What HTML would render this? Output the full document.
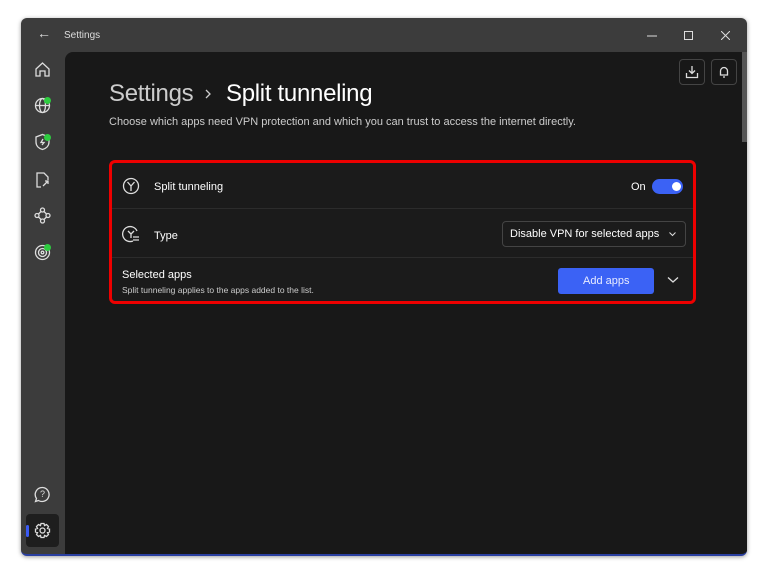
<!DOCTYPE html>
<html><head><meta charset="utf-8"><style>
*{box-sizing:border-box;margin:0;padding:0}
body{width:768px;height:575px;background:#fff;font-family:"Liberation Sans",sans-serif;position:relative;overflow:hidden;color:#fff}
.win{position:absolute;left:21px;top:18px;width:726px;height:538px;background:#3c3c3c;border-radius:6px;overflow:hidden;box-shadow:0 1px 4px rgba(0,0,0,.4);border-bottom:2px solid #2a3fa0}
.content{position:absolute;left:44px;top:34px;right:0;bottom:0;background:#181818;border-top-left-radius:8px}
.t{position:absolute;white-space:nowrap}
svg{position:absolute;fill:none;stroke:#ddd;stroke-width:1.3}
.dot{position:absolute;width:7px;height:7px;border-radius:50%;background:#2ecc40}
.box{position:absolute;left:109px;top:160px;width:587px;height:144px;border:3px solid #e00;border-radius:6px;background:#1b1b1b}
.sep{position:absolute;left:0;right:0;height:1px;background:#2c2c2c}
</style></head><body>
<div class="win">
<div class="t" style="left:16px;top:7px;font-size:14px;color:#ddd">←</div>
<div class="t" style="left:43px;top:12px;font-size:10px;color:#ddd">Settings</div>
<svg style="left:626px;top:17px" width="10" height="2" viewBox="0 0 10 2"><path d="M0 1H10" stroke-width="1"/></svg>
<div style="position:absolute;left:663px;top:13px;width:9px;height:9px;border:1px solid #ddd"></div>
<svg style="left:700px;top:13px" width="9" height="9" viewBox="0 0 9 9"><path d="M0 0L9 9M9 0L0 9" stroke-width="1"/></svg>
<div class="content"></div>
<div style="position:absolute;right:0;top:34px;width:5px;height:90px;background:#555"></div>
</div>
<svg style="left:34px;top:61px" width="17" height="17" viewBox="0 0 17 17"><path d="M2 8 L8.5 2 L15 8 V15 H11 V10 H6 V15 H2 Z"/></svg>
<svg style="left:34px;top:97px" width="17" height="17" viewBox="0 0 17 17"><circle cx="8.5" cy="8.5" r="7"/><ellipse cx="8.5" cy="8.5" rx="3" ry="7"/><path d="M1.5 8.5H15.5"/></svg><div class="dot" style="left:44px;top:97px"></div>
<svg style="left:34px;top:133px" width="17" height="18" viewBox="0 0 17 18"><path d="M8.5 1.5 L15 4 V9 C15 13 12 15.5 8.5 16.5 C5 15.5 2 13 2 9 V4 Z"/><path d="M9 6 L7 9.5 H10 L8 12"/></svg><div class="dot" style="left:44px;top:134px"></div>
<svg style="left:34px;top:171px" width="17" height="18" viewBox="0 0 17 18"><path d="M7 16 H3 V2 H10 L14 6 V9"/><path d="M9 15 L14 10 M11 10 H14 V13"/></svg>
<svg style="left:34px;top:207px" width="17" height="17" viewBox="0 0 17 17"><circle cx="8.5" cy="3" r="2"/><circle cx="3" cy="8.5" r="2"/><circle cx="14" cy="8.5" r="2"/><circle cx="8.5" cy="14" r="2"/><path d="M7 4.5 L4.5 7 M10 4.5 L12.5 7 M4.5 10 L7 12.5 M12.5 10 L10 12.5"/></svg>
<svg style="left:34px;top:244px" width="17" height="17" viewBox="0 0 17 17"><circle cx="8.5" cy="8.5" r="7"/><circle cx="8.5" cy="8.5" r="4"/><circle cx="8.5" cy="8.5" r="1.3"/></svg><div class="dot" style="left:44px;top:244px"></div>
<svg style="left:34px;top:486px" width="17" height="17" viewBox="0 0 17 17"><path d="M8.5 1.5 A7 7 0 1 1 4.5 14.5 L1.5 15.5 L2.5 12.5 A7 7 0 0 1 8.5 1.5Z"/></svg><div class="t" style="left:40px;top:489px;font-size:9px;color:#ddd">?</div>
<div style="position:absolute;left:26px;top:514px;width:33px;height:33px;background:#1e1e1e;border-radius:4px"></div>
<div style="position:absolute;left:26px;top:525px;width:3px;height:12px;background:#3b5bf5;border-radius:2px"></div>
<svg style="left:34px;top:522px" width="17" height="17" viewBox="0 0 17 17"><circle cx="8.5" cy="8.5" r="2.5"/><path d="M7 1.5H10L10.5 3.5L12.5 2.5L14.5 4.5L13.5 6.5L15.5 7V10L13.5 10.5L14.5 12.5L12.5 14.5L10.5 13.5L10 15.5H7L6.5 13.5L4.5 14.5L2.5 12.5L3.5 10.5L1.5 10V7L3.5 6.5L2.5 4.5L4.5 2.5L6.5 3.5Z"/></svg>
<div style="position:absolute;left:679px;top:59px;width:26px;height:26px;border:1px solid #444;border-radius:4px"></div>
<svg style="left:685px;top:65px" width="14" height="14" viewBox="0 0 14 14"><path d="M7 1V8 M4 5.5L7 8.5L10 5.5 M1.5 8V12.5H12.5V8"/></svg>
<div style="position:absolute;left:711px;top:59px;width:26px;height:26px;border:1px solid #444;border-radius:4px"></div>
<svg style="left:717px;top:65px" width="14" height="14" viewBox="0 0 14 14"><path d="M3.5 10V6A3.5 3.5 0 0 1 10.5 6V10H3.5Z M6 12H8"/></svg>
<div class="t" style="left:109px;top:80px;font-size:24px;color:#ccc;letter-spacing:-0.3px">Settings</div>
<svg style="left:205px;top:89px" width="6" height="10" viewBox="0 0 6 10"><path d="M1 1L5 5L1 9" stroke="#ccc"/></svg>
<div class="t" style="left:226px;top:80px;font-size:24px;color:#fff;letter-spacing:-0.3px">Split tunneling</div>
<div class="t" style="left:109px;top:116px;font-size:11px;color:#ccc">Choose which apps need VPN protection and which you can trust to access the internet directly.</div>
<div class="box">
<div class="sep" style="top:45px"></div><div class="sep" style="top:94px"></div>
<svg style="left:10px;top:14px" width="18" height="18" viewBox="0 0 18 18"><circle cx="9" cy="9" r="7.5"/><path d="M9 9V14 M9 9L5.5 5 M9 9L12.5 5"/></svg>
<div class="t" style="left:42px;top:18px;font-size:11px">Split tunneling</div>
<div class="t" style="left:519px;top:18px;font-size:11px">On</div>
<div style="position:absolute;left:540px;top:16px;width:31px;height:15px;border-radius:8px;background:#3b62f5"></div>
<div style="position:absolute;left:560px;top:19px;width:9px;height:9px;border-radius:50%;background:#fff"></div>
<svg style="left:10px;top:62px" width="18" height="18" viewBox="0 0 18 18"><path d="M15 6A7.5 7.5 0 1 0 11 16"/><path d="M9 9V13 M9 9L6 6 M9 9L12 6 M11 12H17 M11 15H17"/></svg>
<div class="t" style="left:42px;top:67px;font-size:11px">Type</div>
<div style="position:absolute;left:390px;top:58px;width:184px;height:26px;border:1px solid #444;border-radius:4px"></div>
<div class="t" style="left:398px;top:65px;font-size:11px">Disable VPN for selected apps</div>
<svg style="left:557px;top:69px" width="7" height="5" viewBox="0 0 7 5"><path d="M0.5 0.5L3.5 3.5L6.5 0.5" stroke-width="1"/></svg>
<div class="t" style="left:10px;top:106px;font-size:11px">Selected apps</div>
<div class="t" style="left:10px;top:122px;font-size:8.5px;color:#ccc">Split tunneling applies to the apps added to the list.</div>
<div style="position:absolute;left:446px;top:105px;width:96px;height:26px;background:#3b62f5;border-radius:3px"></div>
<div class="t" style="left:471px;top:112px;font-size:11px;color:#e8ecff">Add apps</div>
<svg style="left:555px;top:113px" width="12" height="8" viewBox="0 0 12 8"><path d="M1 1.5L6 6L11 1.5"/></svg>
</div>
</body></html>
